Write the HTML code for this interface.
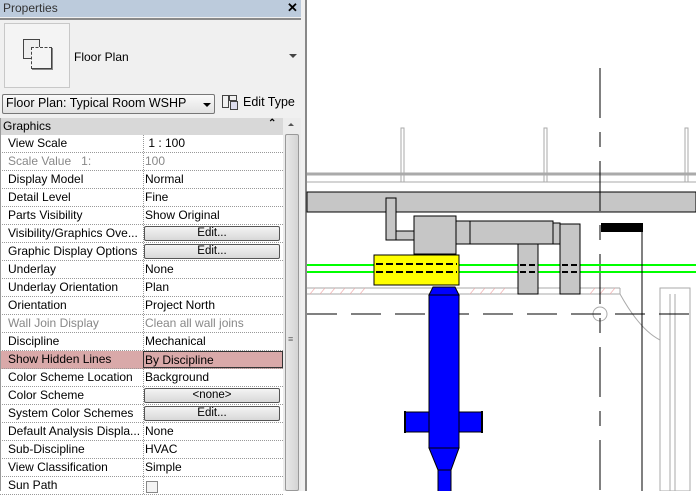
<!DOCTYPE html>
<html><head><meta charset="utf-8"><style>
*{margin:0;padding:0;box-sizing:border-box}
body{width:696px;height:491px;overflow:hidden;background:#fff;font-family:"Liberation Sans",sans-serif;font-size:12px;color:#000;position:relative}
.a{position:absolute}
.row{position:absolute;left:0;width:283px;height:18px;border-bottom:1px dotted #999}
.row .n{position:absolute;left:8px;top:2px;white-space:nowrap}
.row .v{position:absolute;left:143px;top:2px;white-space:nowrap;border-left:1px dotted #999;padding-left:1px;height:17px;top:0;line-height:17px;width:140px}
.row .n{line-height:17px;top:0}
.g{color:#888}
.btn{position:absolute;left:144px;top:1px;width:136px;height:15px;border:1px solid #555;border-radius:2px;background:linear-gradient(#f4f4f4,#d8d8d8);text-align:center;line-height:13px;font-size:11.5px}
</style></head><body>
<!-- panel -->
<div class="a" style="left:0;top:0;width:305px;height:491px;background:#f0f0f0"></div>
<div class="a" style="left:0;top:0;width:301px;height:17px;background:#bccbdc"></div>
<div class="a" style="left:3px;top:1px;color:#333;font-size:12px">Properties</div>
<div class="a" style="left:287px;top:0px;font-size:13px;font-weight:bold">✕</div>
<div class="a" style="left:0;top:18px;width:301px;height:2px;background:#8a8a8a"></div>
<div class="a" style="left:4px;top:23px;width:66px;height:65px;border:1px solid #c8c8c8;background:#f4f4f4"></div>
<div class="a" style="left:23px;top:39px;width:17px;height:20px;border:1px solid #444;background:#eee"></div>
<div class="a" style="left:31px;top:47px;width:21px;height:22px;border:1px solid #444;border-left:1px dashed #444;border-top:1px dashed #444;background:#f4f4f4;box-shadow:1px 1px 0 #888"></div>
<div class="a" style="left:74px;top:50px">Floor Plan</div>
<div class="a" style="left:289px;top:54px;width:0;height:0;border-left:4px solid transparent;border-right:4px solid transparent;border-top:4px solid #444"></div>
<div class="a" style="left:2px;top:94px;width:213px;height:20px;border:1px solid #777;border-radius:2px;background:linear-gradient(#fafafa,#e2e2e2)"></div>
<div class="a" style="left:6px;top:96px;font-size:12.5px">Floor Plan: Typical Room WSHP</div>
<div class="a" style="left:203px;top:103px;border-left:4px solid transparent;border-right:4px solid transparent;border-top:4px solid #000"></div>
<div class="a" style="left:222px;top:95px;width:7px;height:13px;border:1px solid #444"></div>
<div class="a" style="left:229px;top:95px;width:8px;height:6px;border:1px solid #444"></div>
<div class="a" style="left:230px;top:101px;width:8px;height:9px;border:1px solid #444;background:#dde"></div>
<div class="a" style="left:243px;top:95px;font-size:12.5px">Edit Type</div>
<div class="a" style="left:0;top:118px;width:283px;height:17px;background:#d8d8d8"></div>
<div class="a" style="left:3px;top:119px">Graphics</div>
<div class="a" style="left:268px;top:118px;font-size:10px;font-weight:bold">⌃</div>
<div class="a" style="left:283px;top:118px;width:18px;height:373px;background:#ececec"></div>
<div class="a" style="left:288px;top:123px;border-left:3px solid transparent;border-right:3px solid transparent;border-bottom:3px solid #555"></div>
<div class="a" style="left:285px;top:134px;width:14px;height:357px;border:1px solid #999;border-radius:2px;background:linear-gradient(90deg,#e8e8e8,#d4d4d4)"></div>
<div class="a" style="left:288px;top:334px;font-size:9px;color:#666">≡</div>
<div class="a" style="left:0;top:135px;width:283px;height:356px;background:#fff"></div>

<div class="row" style="top:135px"><span class="n">View Scale</span><span class="v">&nbsp;1 : 100</span></div>
<div class="row" style="top:153px"><span class="n g">Scale Value &nbsp;&nbsp;1:</span><span class="v g">100</span></div>
<div class="row" style="top:171px"><span class="n">Display Model</span><span class="v">Normal</span></div>
<div class="row" style="top:189px"><span class="n">Detail Level</span><span class="v">Fine</span></div>
<div class="row" style="top:207px"><span class="n">Parts Visibility</span><span class="v">Show Original</span></div>
<div class="row" style="top:225px"><span class="n">Visibility/Graphics Ove...</span><span class="v"></span><div class="btn">Edit...</div></div>
<div class="row" style="top:243px"><span class="n">Graphic Display Options</span><span class="v"></span><div class="btn">Edit...</div></div>
<div class="row" style="top:261px"><span class="n">Underlay</span><span class="v">None</span></div>
<div class="row" style="top:279px"><span class="n">Underlay Orientation</span><span class="v">Plan</span></div>
<div class="row" style="top:297px"><span class="n">Orientation</span><span class="v">Project North</span></div>
<div class="row" style="top:315px"><span class="n g">Wall Join Display</span><span class="v g">Clean all wall joins</span></div>
<div class="row" style="top:333px"><span class="n">Discipline</span><span class="v">Mechanical</span></div>
<div class="row" style="top:351px;background:#d9a9a9"><span class="n">Show Hidden Lines</span><span class="v" style="border:1px solid #333">By Discipline</span></div>
<div class="row" style="top:369px"><span class="n">Color Scheme Location</span><span class="v">Background</span></div>
<div class="row" style="top:387px"><span class="n">Color Scheme</span><span class="v"></span><div class="btn">&lt;none&gt;</div></div>
<div class="row" style="top:405px"><span class="n">System Color Schemes</span><span class="v"></span><div class="btn">Edit...</div></div>
<div class="row" style="top:423px"><span class="n">Default Analysis Displa...</span><span class="v">None</span></div>
<div class="row" style="top:441px"><span class="n">Sub-Discipline</span><span class="v">HVAC</span></div>
<div class="row" style="top:459px"><span class="n">View Classification</span><span class="v">Simple</span></div>
<div class="row" style="top:477px"><span class="n">Sun Path</span><span class="v"></span><div class="a" style="left:146px;top:4px;width:12px;height:12px;border:1px solid #888;background:#f4f4f4"></div></div>
<div class="a" style="left:0;top:118px;width:1px;height:373px;background:#999"></div>

<!-- canvas -->
<div class="a" style="left:305px;top:0;width:2px;height:491px;background:#888"></div>
<svg class="a" style="left:0;top:0" width="696" height="491">
<g stroke="#aaa" fill="none">
<line x1="307" y1="174" x2="696" y2="174" stroke-width="3"/>
<line x1="307" y1="182" x2="696" y2="182"/>
<rect x="401" y="128" width="3" height="54"/><rect x="544" y="128" width="3" height="54"/><rect x="685" y="128" width="3" height="54"/>
<line x1="307" y1="288" x2="620" y2="288"/><line x1="307" y1="294" x2="620" y2="294"/>
<path d="M620 288 L620 294 Q640 330 660 340"/>
<rect x="660" y="288" width="30" height="203"/><line x1="670" y1="294" x2="670" y2="491"/><line x1="675" y1="294" x2="675" y2="491"/>
<circle cx="600" cy="314" r="7"/>
</g>
<g stroke="#f0b0b0" stroke-width="0.7">
<path d="M310 294l5-6M320 294l5-6M330 294l5-6M340 294l5-6M350 294l5-6M360 294l5-6M470 294l5-6M480 294l5-6M490 294l5-6M500 294l5-6M590 294l5-6M600 294l5-6M610 294l5-6"/>
</g>
<rect x="307" y="192" width="389" height="20" fill="#c6c6c6" stroke="#000"/>
<line x1="600" y1="68" x2="600" y2="491" stroke="#000" stroke-dasharray="50,14,15,14"/>
<line x1="307" y1="314" x2="696" y2="314" stroke="#000" stroke-dasharray="30,14"/>
<line x1="307" y1="265" x2="696" y2="265" stroke="#0f0" stroke-width="2"/>
<line x1="307" y1="272" x2="696" y2="272" stroke="#0f0" stroke-width="2"/>
<g fill="#c6c6c6" stroke="#000">
<rect x="386" y="198" width="10" height="42"/>
<rect x="396" y="231" width="18" height="9"/>
<rect x="414" y="216" width="42" height="38"/>
<rect x="456" y="221" width="14" height="23"/>
<rect x="470" y="221" width="83" height="23"/>
<rect x="553" y="223" width="7" height="21"/>
<rect x="560" y="224" width="20" height="70"/>
<rect x="518" y="244" width="20" height="50"/>
</g>
<rect x="374" y="255" width="85" height="30" fill="#ff0" stroke="#000"/>
<line x1="376" y1="264" x2="457" y2="264" stroke="#000" stroke-width="2" stroke-dasharray="7,3"/>
<line x1="376" y1="272" x2="457" y2="272" stroke="#000" stroke-width="2" stroke-dasharray="7,3"/>
<path d="M520 265h16M562 265h16M520 272h16M562 272h16" stroke="#000" stroke-width="2" stroke-dasharray="6,3"/>
<rect x="601" y="223" width="42" height="9" fill="#000"/>
<line x1="642" y1="232" x2="642" y2="491" stroke="#000"/>
<g fill="#00f" stroke="#000">
<path d="M433 287h22l4 8h-30z"/>
<rect x="429" y="295" width="30" height="153"/>
<rect x="405" y="412" width="24" height="20"/><rect x="459" y="412" width="23" height="20"/>
<path d="M429 448h30l-8 22h-13z"/>
<rect x="438" y="470" width="13" height="25"/>
</g>
<path d="M405 411v22M482 411v22" stroke="#000" stroke-width="2"/>
</svg>
</body></html>
